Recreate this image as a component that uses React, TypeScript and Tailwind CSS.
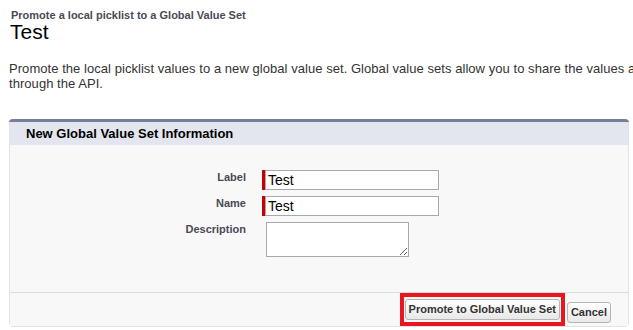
import React from "react";

export default function App() {
  const font = { fontFamily: '"Liberation Sans", Arial, sans-serif' };
  return (
    <div className="w-[633px] h-[330px] overflow-hidden bg-white pl-[9px]" style={font}>
      <div className="pt-[10px] pl-[2px] text-[11px] leading-[11px] font-bold text-[#4a4a56]">
        Promote a local picklist to a Global Value Set
      </div>
      <div className="pl-[1px] text-[21px] leading-[22px] text-black">Test</div>
      <p className="mt-[18px] whitespace-nowrap text-[13px] tracking-[0.05px] leading-[15px] text-[#333]">
        Promote the local picklist values to a new global value set. Global value sets allow you to share the values across objects and manage them
        <br />
        through the API.
      </p>
      <div className="mt-[28px] w-[620px] rounded-t-[4px] rounded-b-[4px] border-t-[3px] border-[#747e96] overflow-hidden">
        <div className="border-x border-b border-[#e0e3e5] rounded-b-[4px]">
          <div className="h-[23px] bg-[#e3e6ee] pl-[16px] flex items-center">
            <span className="text-[13px] font-bold text-black leading-none">New Global Value Set Information</span>
          </div>
          <div className="bg-[#f8f8f8] pt-[25px] h-[148px] border-b border-[#dbdbdb]">
            <div className="flex items-start h-[20px]">
              <div className="w-[236px] text-right pt-[1px] text-[11px] leading-[12px] font-bold text-[#4a4a56]">Label</div>
              <div className="ml-[16px] w-[3px] h-[20px] bg-[#c00]" />
              <input
                readOnly
                value="Test"
                className="w-[174px] h-[20px] border border-[#a9a9a9] bg-white px-[2px] text-[14px] text-black outline-none"
                style={font}
              />
            </div>
            <div className="flex items-start h-[20px] mt-[6px]">
              <div className="w-[236px] text-right pt-[1px] text-[11px] leading-[12px] font-bold text-[#4a4a56]">Name</div>
              <div className="ml-[16px] w-[3px] h-[20px] bg-[#c00]" />
              <input
                readOnly
                value="Test"
                className="w-[174px] h-[20px] border border-[#a9a9a9] bg-white px-[2px] text-[14px] text-black outline-none"
                style={font}
              />
            </div>
            <div className="flex items-start mt-[6px]">
              <div className="w-[236px] text-right pt-[1px] text-[11px] leading-[12px] font-bold text-[#4a4a56]">Description</div>
              <textarea
                readOnly
                className="ml-[20px] w-[143px] h-[35px] border border-[#a9a9a9] bg-white outline-none"
              />
            </div>
          </div>
          <div className="bg-[#f8f8f8] h-[33px] flex items-start justify-end pr-[17px]">
            <div className="border-[4px] border-[#e8161e] px-[1px] py-[2px] flex">
              <button className="h-[21px] px-[3px] rounded-[3px] border border-[#b5b5b5] bg-gradient-to-b from-[#ffffff] to-[#e8e8e8] text-[11px] font-bold text-[#333] leading-none" style={font}>
                Promote to Global Value Set
              </button>
            </div>
            <div className="ml-[2px] pt-[6px]">
              <button className="h-[21px] px-[3px] rounded-[3px] border border-[#b5b5b5] bg-gradient-to-b from-[#ffffff] to-[#e8e8e8] text-[11px] font-bold text-[#333] leading-none" style={font}>
                Cancel
              </button>
            </div>
          </div>
        </div>
      </div>
    </div>
  );
}
